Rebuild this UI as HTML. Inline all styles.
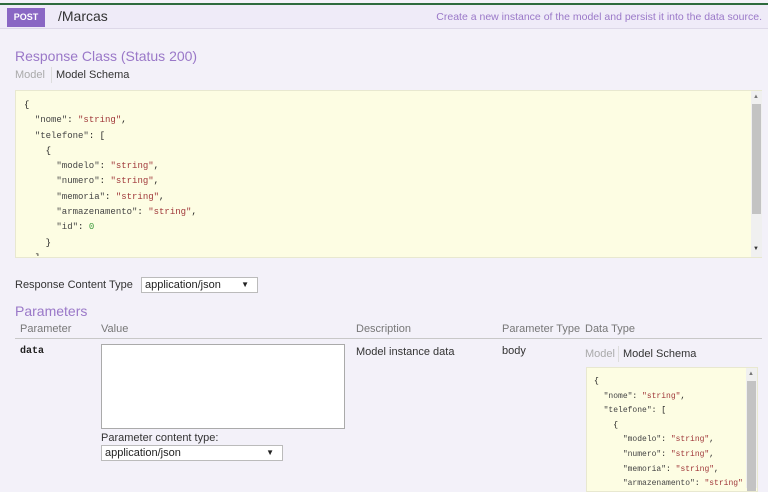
<!DOCTYPE html>
<html><head><style>
*{margin:0;padding:0;box-sizing:border-box}
body{width:768px;height:486px;overflow:hidden;background:#f3f1f9;font-family:"Liberation Sans",sans-serif;position:relative;color:#222}
.a{position:absolute;white-space:nowrap}
.mono{font-family:"Liberation Mono",monospace;font-size:9px;color:#222}
.k{color:#444}.s{color:#a0383a}.n{color:#3a9a3a}
.code div{height:15.3px;line-height:15.3px}
.code2 div{height:14.6px;line-height:14.6px}
</style></head><body>
<div class="a" style="left:0;top:3px;width:768px;height:2px;background:#2e6b3e"></div>
<div class="a" style="left:0;top:5px;width:768px;height:24px;background:#efebf8;border-bottom:1px solid #ddd8e8"></div>
<div class="a" style="left:7px;top:8px;width:38px;height:19px;background:#8a67c4;color:#fff;font-size:9px;font-weight:bold;line-height:19px;text-align:center">POST</div>
<div class="a" style="left:58px;top:8px;font-size:14px;color:#333">/Marcas</div>
<div class="a" style="right:6px;top:11px;font-size:10.5px;color:#9a78c8">Create a new instance of the model and persist it into the data source.</div>
<div class="a" style="left:15px;top:48px;font-size:14px;color:#9a78c8">Response Class (Status 200)</div>
<div class="a" style="left:15px;top:69px;font-size:11px;color:#aaa">Model</div>
<div class="a" style="left:51px;top:67px;width:1px;height:16px;background:#ddd"></div>
<div class="a" style="left:56px;top:69px;font-size:11px;color:#333">Model Schema</div>
<div class="a" style="left:15px;top:90px;width:747px;height:168px;background:#fdfde3;border:1px solid #e8e8d0"></div>
<div class="a" style="left:751px;top:91px;width:11px;height:166px;background:#f0f0f0"></div>
<div class="a" style="left:752px;top:104px;width:9px;height:110px;background:#c3c3c3"></div>
<div class="a" style="left:753px;top:94px;font-size:6px;color:#777">▲</div>
<div class="a" style="left:753px;top:246px;font-size:6px;color:#333">▼</div>
<div class="a mono code" style="left:24px;top:98px;width:720px;height:158px;overflow:hidden">
<div>{</div>
<div>&nbsp;&nbsp;<span class="k">"nome"</span>: <span class="s">"string"</span>,</div>
<div>&nbsp;&nbsp;<span class="k">"telefone"</span>: [</div>
<div>&nbsp;&nbsp;&nbsp;&nbsp;{</div>
<div>&nbsp;&nbsp;&nbsp;&nbsp;&nbsp;&nbsp;<span class="k">"modelo"</span>: <span class="s">"string"</span>,</div>
<div>&nbsp;&nbsp;&nbsp;&nbsp;&nbsp;&nbsp;<span class="k">"numero"</span>: <span class="s">"string"</span>,</div>
<div>&nbsp;&nbsp;&nbsp;&nbsp;&nbsp;&nbsp;<span class="k">"memoria"</span>: <span class="s">"string"</span>,</div>
<div>&nbsp;&nbsp;&nbsp;&nbsp;&nbsp;&nbsp;<span class="k">"armazenamento"</span>: <span class="s">"string"</span>,</div>
<div>&nbsp;&nbsp;&nbsp;&nbsp;&nbsp;&nbsp;<span class="k">"id"</span>: <span class="n">0</span></div>
<div>&nbsp;&nbsp;&nbsp;&nbsp;}</div>
<div>&nbsp;&nbsp;]</div>
</div>
<div class="a" style="left:15px;top:279px;font-size:11px;color:#333">Response Content Type</div>
<div class="a" style="left:141px;top:277px;width:117px;height:16px;background:#fff;border:1px solid #bbb;font-size:11px;padding-left:3px;line-height:14px">application/json<span style="position:absolute;right:8px;font-size:8px">▼</span></div>
<div class="a" style="left:15px;top:303px;font-size:14px;color:#9a78c8">Parameters</div>
<div class="a" style="left:20px;top:323px;font-size:11px;color:#777">Parameter</div>
<div class="a" style="left:101px;top:323px;font-size:11px;color:#777">Value</div>
<div class="a" style="left:356px;top:323px;font-size:11px;color:#777">Description</div>
<div class="a" style="left:502px;top:323px;font-size:11px;color:#777">Parameter Type</div>
<div class="a" style="left:585px;top:323px;font-size:11px;color:#777">Data Type</div>
<div class="a" style="left:15px;top:338px;width:747px;height:1px;background:#c8c8c8"></div>
<div class="a mono" style="left:20px;top:346px;font-weight:bold;font-size:10px">data</div>
<div class="a" style="left:101px;top:344px;width:244px;height:85px;background:#fff;border:1px solid #aaa"></div>
<div class="a" style="left:101px;top:432px;font-size:11px;color:#333">Parameter content type:</div>
<div class="a" style="left:101px;top:445px;width:182px;height:16px;background:#fff;border:1px solid #bbb;font-size:11px;padding-left:3px;line-height:14px">application/json<span style="position:absolute;right:8px;font-size:8px">▼</span></div>
<div class="a" style="left:356px;top:346px;font-size:11px;color:#333">Model instance data</div>
<div class="a" style="left:502px;top:345px;font-size:11px;color:#333">body</div>
<div class="a" style="left:585px;top:348px;font-size:11px;color:#aaa">Model</div>
<div class="a" style="left:618px;top:346px;width:1px;height:16px;background:#ddd"></div>
<div class="a" style="left:623px;top:348px;font-size:11px;color:#333">Model Schema</div>
<div class="a" style="left:586px;top:367px;width:172px;height:125px;background:#fdfde3;border:1px solid #e8e8d0"></div>
<div class="a" style="left:746px;top:368px;width:11px;height:120px;background:#f0f0f0"></div>
<div class="a" style="left:747px;top:381px;width:9px;height:110px;background:#c3c3c3"></div>
<div class="a" style="left:748px;top:371px;font-size:6px;color:#777">▲</div>
<div class="a mono code2" style="left:594px;top:375px;width:152px;height:112px;overflow:hidden;font-size:8px">
<div>{</div>
<div>&nbsp;&nbsp;<span class="k">"nome"</span>: <span class="s">"string"</span>,</div>
<div>&nbsp;&nbsp;<span class="k">"telefone"</span>: [</div>
<div>&nbsp;&nbsp;&nbsp;&nbsp;{</div>
<div>&nbsp;&nbsp;&nbsp;&nbsp;&nbsp;&nbsp;<span class="k">"modelo"</span>: <span class="s">"string"</span>,</div>
<div>&nbsp;&nbsp;&nbsp;&nbsp;&nbsp;&nbsp;<span class="k">"numero"</span>: <span class="s">"string"</span>,</div>
<div>&nbsp;&nbsp;&nbsp;&nbsp;&nbsp;&nbsp;<span class="k">"memoria"</span>: <span class="s">"string"</span>,</div>
<div>&nbsp;&nbsp;&nbsp;&nbsp;&nbsp;&nbsp;<span class="k">"armazenamento"</span>: <span class="s">"string"</span></div>
</div>
</body></html>
